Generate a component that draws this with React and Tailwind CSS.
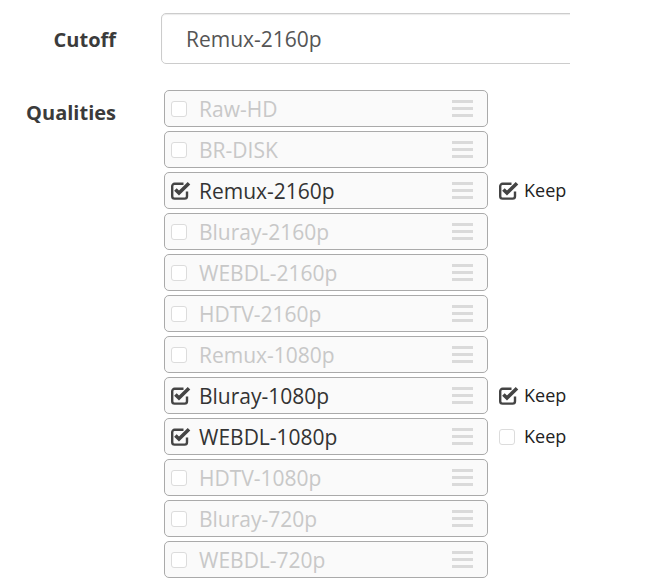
import React from "react";

const qualities = [
  { name: "Raw-HD", allowed: false },
  { name: "BR-DISK", allowed: false },
  { name: "Remux-2160p", allowed: true, keep: true },
  { name: "Bluray-2160p", allowed: false },
  { name: "WEBDL-2160p", allowed: false },
  { name: "HDTV-2160p", allowed: false },
  { name: "Remux-1080p", allowed: false },
  { name: "Bluray-1080p", allowed: true, keep: true },
  { name: "WEBDL-1080p", allowed: true, keep: false },
  { name: "HDTV-1080p", allowed: false },
  { name: "Bluray-720p", allowed: false },
  { name: "WEBDL-720p", allowed: false },
];

function CheckedBox() {
  return (
    <svg width="20" height="19" viewBox="0 0 20 19" className="shrink-0">
      <path
        d="M12.5 2.8H3.6A2.4 2.4 0 0 0 1.2 5.2v10a2.4 2.4 0 0 0 2.4 2.4h10a2.4 2.4 0 0 0 2.4-2.4V10.5"
        fill="none"
        stroke="#444"
        strokeWidth="2.4"
      />
      <path
        d="M4.4 8.4l3.6 3.6L18 2.2"
        fill="none"
        stroke="#444"
        strokeWidth="3.6"
        strokeLinejoin="miter"
      />
    </svg>
  );
}

function EmptyBox() {
  return (
    <span className="block w-[16px] h-[16px] shrink-0 rounded-[3px] border border-[#dcdcdc] bg-white" />
  );
}

function Handle() {
  return (
    <div className="flex flex-col gap-[4px] w-[21px]">
      <span className="block h-[3px] bg-[#dadada]" />
      <span className="block h-[3px] bg-[#dadada]" />
      <span className="block h-[3px] bg-[#dadada]" />
    </div>
  );
}

export default function App() {
  return (
    <div
      className="w-[657px] h-[582px] bg-white overflow-hidden text-[#333]"
      style={{ fontFamily: '"Open Sans", "Noto Sans", sans-serif' }}
    >
      {/* Cutoff */}
      <div className="flex pt-[13px]">
        <label className="w-[116px] shrink-0 text-right font-bold text-[20px] leading-[49px] pt-[2px] text-[#3b3b3b]">
          Cutoff
        </label>
        <div className="ml-[45px] w-[409px] overflow-hidden">
          <div className="w-[440px] h-[51px] rounded-[5px] border border-[#cccccc] shadow-[inset_0_1px_1px_rgba(0,0,0,0.08)] pl-[24px] pt-[1px] text-[21px] leading-[48px] text-[#555]">
            Remux-2160p
          </div>
        </div>
      </div>

      {/* Qualities */}
      <div className="flex mt-[26px]">
        <label className="w-[116px] shrink-0 text-right font-bold text-[20px] leading-[37px] mt-[4px] text-[#3b3b3b]">
          Qualities
        </label>
        <div className="ml-[48px] flex flex-col gap-[4px]">
          {qualities.map((q) => (
            <div key={q.name} className="flex items-center">
              <div className="w-[324px] h-[37px] flex items-center rounded-[5px] border border-[#aaaaaa] bg-[#fafafa] pl-[6px] pr-[14px]">
                <div className="w-[19px] flex items-center">
                  {q.allowed ? <CheckedBox /> : <EmptyBox />}
                </div>
                <span
                  className={`ml-[9px] flex-1 pt-[1px] text-[21px] leading-[34px] ${
                    q.allowed ? "text-[#333]" : "text-[#c8c8c8]"
                  }`}
                >
                  {q.name}
                </span>
                <Handle />
              </div>
              {q.allowed && (
                <div className="ml-[11px] flex items-center">
                  <div className="w-[19px] flex items-center">
                    {q.keep ? <CheckedBox /> : <EmptyBox />}
                  </div>
                  <span className="ml-[6px] text-[18px] text-[#222]">Keep</span>
                </div>
              )}
            </div>
          ))}
        </div>
      </div>
    </div>
  );
}
